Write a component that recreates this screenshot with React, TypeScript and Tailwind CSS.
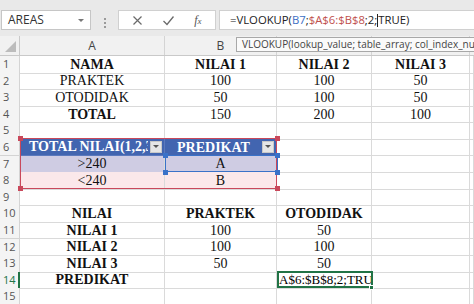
import React from 'react';

const cols = 'grid grid-cols-[20px_145px_112px_95px_98px_1fr]';
const serif = "font-['Liberation_Serif',serif]";
const sans = "font-['Open_Sans','Noto_Sans',sans-serif]";

type Row = { n: number; cells: (string | null)[]; bold?: boolean[]; bg?: string[] };

const rows: Row[] = [
  { n: 1, cells: ['NAMA', 'NILAI 1', 'NILAI 2', 'NILAI 3'], bold: [true, true, true, true] },
  { n: 2, cells: ['PRAKTEK', '100', '100', '50'] },
  { n: 3, cells: ['OTODIDAK', '50', '100', '50'] },
  { n: 4, cells: ['TOTAL', '150', '200', '100'], bold: [true] },
  { n: 5, cells: [] },
  { n: 6, cells: [null, null] },
  { n: 7, cells: ['>240', 'A'], bg: ['bg-[#cfcce3]', 'bg-[#cfcce3]'] },
  { n: 8, cells: ['<240', 'B'], bg: ['bg-[#fbe8ea]', 'bg-[#fbe8ea]'] },
  { n: 9, cells: [] },
  { n: 10, cells: ['NILAI', 'PRAKTEK', 'OTODIDAK'], bold: [true, true, true] },
  { n: 11, cells: ['NILAI 1', '100', '50'], bold: [true] },
  { n: 12, cells: ['NILAI 2', '100', '100'], bold: [true] },
  { n: 13, cells: ['NILAI 3', '50', '50'], bold: [true] },
  { n: 14, cells: ['PREDIKAT', '', null], bold: [true] },
  { n: 15, cells: [] },
];

const DropBtn = () => (
  <span className="absolute right-[2px] top-[2px] w-[12px] h-[12px] bg-[#e6e6e6] border border-[#c8c8c8] flex items-center justify-center">
    <span className="w-0 h-0 border-l-[3px] border-r-[3px] border-t-[3px] border-l-transparent border-r-transparent border-t-[#555]" />
  </span>
);

const Handle = ({ color, left, top }: { color: string; left: number; top: number }) => (
  <div className={`absolute w-[5px] h-[5px] ${color}`} style={{ left: left - 2.5, top: top - 2.5 }} />
);

const RH = 16.6;

export default function App() {
  return (
    <div className={`w-[474px] h-[304px] overflow-hidden bg-white ${sans}`}>
      {/* formula bar */}
      <div className="h-[36px] bg-[#e9e9e9] pt-[10px] flex text-[12px] text-[#333]">
        <div className="ml-[1px] w-[90px] h-[20px] bg-white border border-[#c6c6c6] flex items-center pl-[6px] pr-[6px] justify-between">
          <span>AREAS</span>
          <span className="w-0 h-0 border-l-[3px] border-r-[3px] border-t-[3px] border-l-transparent border-r-transparent border-t-[#777]" />
        </div>
        <div className="w-[27px] flex flex-col items-center justify-center gap-[2px]">
          <span className="w-[2px] h-[2px] bg-[#9a9a9a]" />
          <span className="w-[2px] h-[2px] bg-[#9a9a9a]" />
          <span className="w-[2px] h-[2px] bg-[#9a9a9a]" />
        </div>
        <div className="w-[98px] h-[20px] bg-white border border-[#d0d0d0] flex items-center justify-around px-[4px] text-[#666]">
          <svg width="11" height="11" viewBox="0 0 11 11"><path d="M1.5 1.5 9.5 9.5M9.5 1.5 1.5 9.5" stroke="#6a6a6a" strokeWidth="1.2" fill="none" /></svg>
          <svg width="13" height="11" viewBox="0 0 13 11"><path d="M1.5 6 5 9.5 11.5 1.5" stroke="#6a6a6a" strokeWidth="1.3" fill="none" /></svg>
          <span className={`${serif} italic text-[12px] text-[#555]`}>f<span className="text-[9px]">x</span></span>
        </div>
        <div className="ml-[3px] flex-1 h-[20px] bg-white border border-[#d0d0d0] border-r-0 flex items-center pl-[10px] text-[11.3px] text-[#222] whitespace-nowrap">
          =VLOOKUP(<span className="text-[#3c6fc4]">B7</span>;<span className="text-[#c0504d]">$A$6:$B$8</span>;2;<span className="inline-block w-[1px] h-[13px] bg-[#222] align-middle" />TRUE)
        </div>
      </div>

      {/* column headers */}
      <div className={`${cols} h-[20px] bg-[#f1f1f1] border-b border-[#c9c9c9] text-[12px] text-[#444] relative`}>
        <div className="border-r border-[#c9c9c9] relative">
          <svg className="absolute right-[3px] bottom-[3px]" width="11" height="11" viewBox="0 0 11 11">
            <polygon points="11,0 11,11 0,11" fill="#bcbcbc" />
          </svg>
        </div>
        <div className="border-r border-[#d4d4d4] flex items-center justify-center">A</div>
        <div className="border-r border-[#d4d4d4] flex items-center justify-center">B</div>
        <div className="border-r border-[#d4d4d4]" />
        <div className="border-r border-[#d4d4d4]" />
        <div />
        <div className="absolute left-[236px] top-[1px] right-[-2px] h-[15px] bg-[#fafafa] border border-[#a8a8a8] text-[10px] text-[#444] pl-[5px] leading-[13px] whitespace-nowrap overflow-hidden">
          VLOOKUP(lookup_value; table_array; col_index_nu
        </div>
      </div>

      {/* sheet body */}
      <div className="relative">
        {rows.map((r) => (
          <div key={r.n} className={`${cols} h-[16.6px]`}>
            <div className={`bg-[#f4f4f4] border-r border-b border-[#d4d4d4] text-[11px] text-[#555] flex items-center pl-[3px] ${r.n === 14 ? 'border-r-2 border-r-[#217346] text-[#217346]' : ''}`}>
              {r.n}
            </div>
            {[0, 1, 2, 3, 4].map((c) => {
              const t = r.cells[c];
              const bg = r.bg?.[c] ?? '';
              if (r.n === 6 && c < 2) {
                return (
                  <div key={c} className={`relative bg-[#4265b0] border-r border-b border-[#5b79bd] text-white font-bold ${serif} text-[14px] flex items-center justify-center overflow-hidden whitespace-nowrap pr-[14px]`}>
                    {c === 0 ? <span className="absolute left-[9px] top-0 leading-[16px]">TOTAL NILAI(1,2,3)</span> : <span>PREDIKAT</span>}
                    {c === 0 && <span className="absolute right-0 top-0 bottom-0 w-[16px] bg-[#4265b0]" />}
                    <DropBtn />
                  </div>
                );
              }
              if (r.n === 14 && c === 2) {
                return (
                  <div key={c} className={`relative border-r border-b border-[#dadada] ${serif} text-[13px] overflow-hidden whitespace-nowrap flex items-center pl-[2px]`}>
                    A$6:$B$8;2;TRU
                  </div>
                );
              }
              return (
                <div key={c} className={`border-r border-b border-[#dadada] ${bg} ${serif} text-[14px] text-[#111] flex items-center justify-center whitespace-nowrap overflow-hidden ${r.bold?.[c] ? 'font-bold' : ''}`}>
                  {t}
                </div>
              );
            })}
            <div className="border-b border-[#dadada]" />
          </div>
        ))}

        {/* table border */}
        <div className="absolute left-[20px] w-[257px] border border-[#c9485b]" style={{ top: 5 * RH - 1, height: 3 * RH + 1 }} />
        {/* selection on B7 */}
        <div className="absolute left-[165px] w-[113px] border border-[#3a72c8]" style={{ top: 6 * RH - 1, height: RH + 1 }} />
        {/* active cell C14 */}
        <div className="absolute left-[277px] w-[96px] border-2 border-[#217346]" style={{ top: 13 * RH - 1, height: RH + 1 }} />
        <div className="absolute w-[5px] h-[5px] bg-[#217346] border border-white left-[369px]" style={{ top: 14 * RH - 3 }} />

        <Handle color="bg-[#c9485b]" left={20.5} top={5 * RH - 0.5} />
        <Handle color="bg-[#c9485b]" left={277.5} top={5 * RH - 0.5} />
        <Handle color="bg-[#c9485b]" left={20.5} top={8 * RH} />
        <Handle color="bg-[#c9485b]" left={277.5} top={8 * RH} />
        <Handle color="bg-[#3a72c8]" left={165.5} top={6 * RH - 0.5} />
        <Handle color="bg-[#3a72c8]" left={277.5} top={6 * RH - 0.5} />
        <Handle color="bg-[#3a72c8]" left={165.5} top={7 * RH} />
        <Handle color="bg-[#3a72c8]" left={277.5} top={7 * RH} />
      </div>
    </div>
  );
}
